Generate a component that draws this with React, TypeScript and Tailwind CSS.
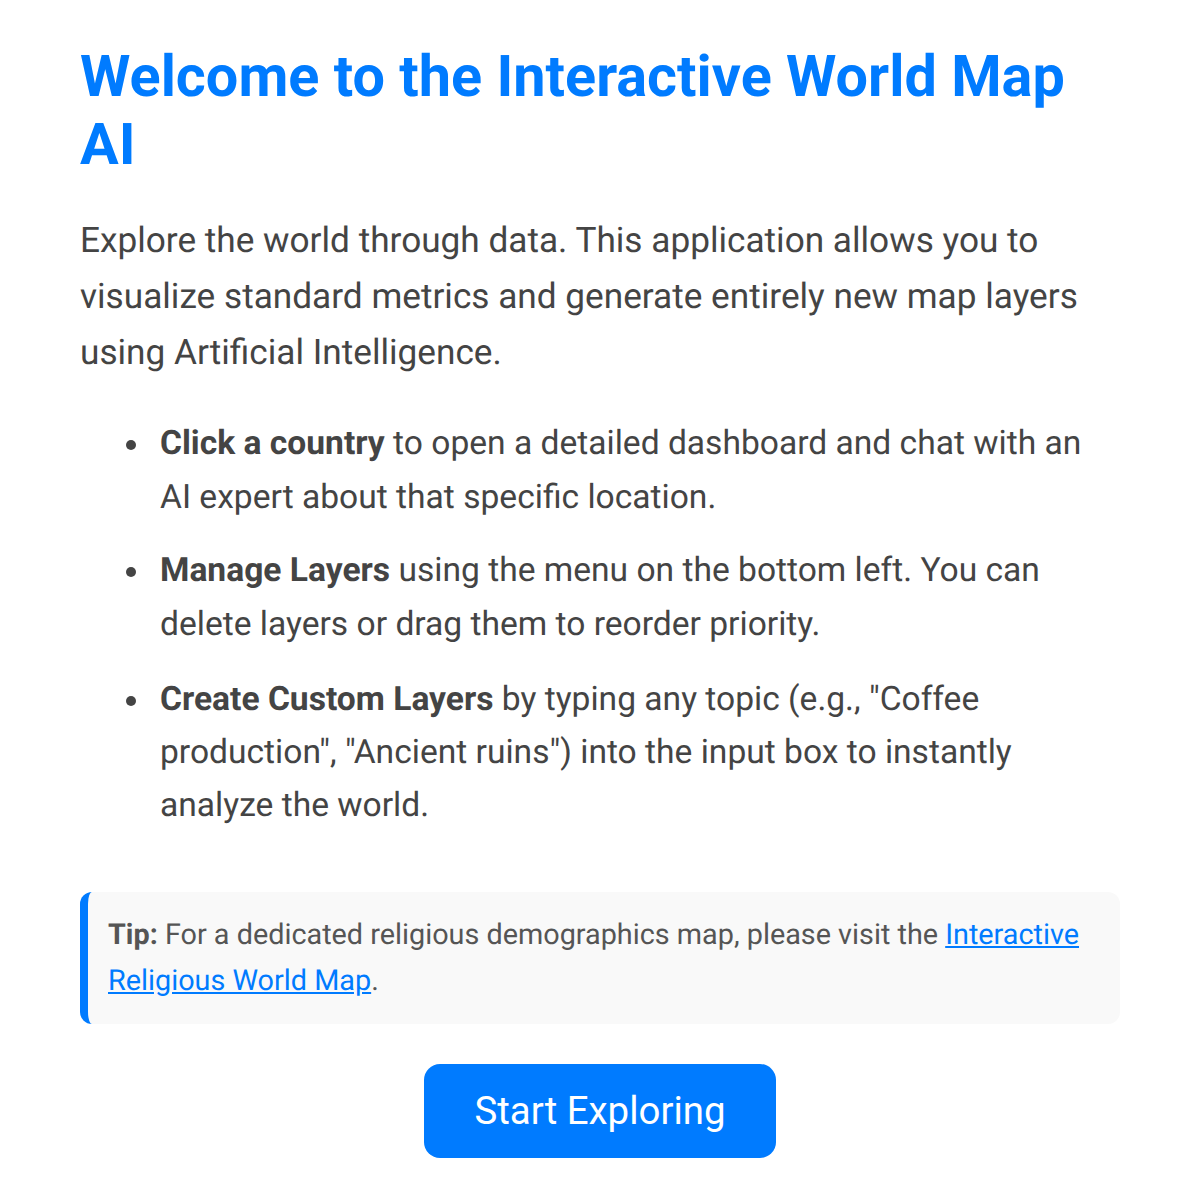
const items = [
  {
    title: "Click a country",
    text: " to open a detailed dashboard and chat with an AI expert about that specific location.",
    className: "mb-[19px] leading-[54px]",
  },
  {
    title: "Manage Layers",
    text: " using the menu on the bottom left. You can delete layers or drag them to reorder priority.",
    className: "mb-[21px] leading-[54px]",
  },
  {
    title: "Create Custom Layers",
    text: ' by typing any topic (e.g., "Coffee production", "Ancient ruins") into the input box to instantly analyze the world.',
    className: "mb-[19px] leading-[53px]",
  },
];

export default function App() {
  return (
    <div className="min-h-[1200px] bg-white px-20 pt-[44px] font-['Roboto',sans-serif] [text-rendering:geometricPrecision]">
      <h1 className="text-[57.6px] font-bold leading-[67.5px] text-[#007bff]">
        Welcome to the Interactive World Map AI
      </h1>
      <p className="mt-[33px] text-[35.2px] leading-[56px] text-[#444444]">
        Explore the world through data. This application allows you to visualize standard metrics and generate entirely new map layers using Artificial Intelligence.
      </p>
      <ul className="mt-[37px] pl-[46px] text-[33.6px] text-[#444444]">
        {items.map((item) => (
          <li key={item.title} className={`flex items-start gap-6 ${item.className}`}>
            <span className="mt-[23px] h-[10px] w-[10px] shrink-0 rounded-full bg-[#444444]" />
            <div>
              <strong className="font-bold">{item.title}</strong>
              {item.text}
            </div>
          </li>
        ))}
      </ul>
      <div className="mt-[60px] rounded-xl border-l-8 border-[#007bff] bg-[#f9f9f9] py-5 pl-5 pr-5 text-[28.8px] leading-[46px] text-[#555555]">
        <strong className="font-bold">Tip:</strong> For a dedicated religious demographics map, please visit the{" "}
        <a href="#" className="text-[#007bff] underline">Interactive Religious World Map</a>.
      </div>
      <div className="mt-10 flex justify-center">
        <button className="h-[94px] w-[352px] rounded-2xl bg-[#007bff] text-[38.4px] text-white">Start Exploring</button>
      </div>
    </div>
  );
}
